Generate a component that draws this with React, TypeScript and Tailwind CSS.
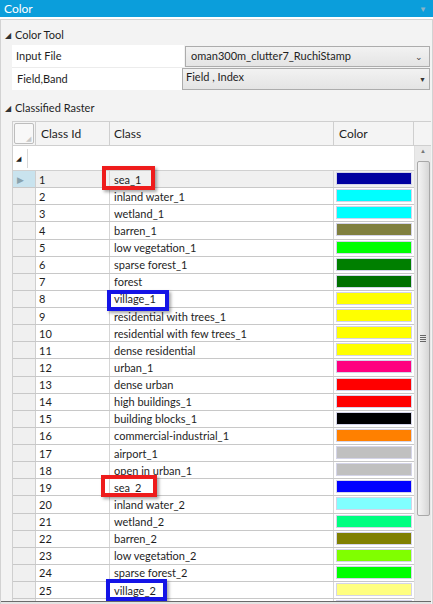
import React from "react";

type Row = { id: number; name: string; color: string };

const rows: Row[] = [
  { id: 1, name: "sea_1", color: "#0000a0" },
  { id: 2, name: "inland water_1", color: "#00ffff" },
  { id: 3, name: "wetland_1", color: "#00ffff" },
  { id: 4, name: "barren_1", color: "#808040" },
  { id: 5, name: "low vegetation_1", color: "#00ff00" },
  { id: 6, name: "sparse forest_1", color: "#007f00" },
  { id: 7, name: "forest", color: "#007000" },
  { id: 8, name: "village_1", color: "#ffff00" },
  { id: 9, name: "residential with trees_1", color: "#ffff00" },
  { id: 10, name: "residential with few trees_1", color: "#ffff00" },
  { id: 11, name: "dense residential", color: "#ffff00" },
  { id: 12, name: "urban_1", color: "#ff0080" },
  { id: 13, name: "dense urban", color: "#ff0000" },
  { id: 14, name: "high buildings_1", color: "#ff0000" },
  { id: 15, name: "building blocks_1", color: "#000000" },
  { id: 16, name: "commercial-industrial_1", color: "#ff8000" },
  { id: 17, name: "airport_1", color: "#c0c0c0" },
  { id: 18, name: "open in urban_1", color: "#c0c0c0" },
  { id: 19, name: "sea_2", color: "#0000ff" },
  { id: 20, name: "inland water_2", color: "#80ffff" },
  { id: 21, name: "wetland_2", color: "#00ff80" },
  { id: 22, name: "barren_2", color: "#808000" },
  { id: 23, name: "low vegetation_2", color: "#80ff00" },
  { id: 24, name: "sparse forest_2", color: "#00ff00" },
  { id: 25, name: "village_2", color: "#ffff80" },
  { id: 26, name: "", color: "#ffff80" },
];

// boxes drawn over the grid (relative to the rows area)
const marks = [
  { top: -5, left: 89, w: 53, h: 24, red: true },
  { top: 119, left: 94, w: 62, h: 21, red: false },
  { top: 304, left: 88, w: 56, h: 22, red: true },
  { top: 408, left: 93, w: 61, h: 22, red: false },
];

function SectionHeader({ label }: { label: string }) {
  return (
    <div className="flex h-[20px] shrink-0 items-center gap-[4px] pl-[4px] text-[11px] text-[#1e1e1e]">
      <span className="text-[8px] leading-none text-[#333]">◢</span>
      <span>{label}</span>
    </div>
  );
}

export default function App() {
  return (
    <div
      className="flex h-[604px] w-[433px] flex-col overflow-hidden bg-white"
      style={{ fontFamily: "Lato, 'Open Sans', sans-serif" }}
    >
      <div className="flex h-[17px] shrink-0 items-center justify-between bg-[#0b9edb] pl-[4px] pr-[6px] text-[12px] text-white">
        <span>Color</span>
        <span className="text-[8px] text-[#8ab4c8]">▼</span>
      </div>
      <div className="h-[2px] shrink-0 bg-white" />
      <div className="flex min-h-0 flex-1 flex-col border-l border-r border-t border-[#d2d2d2] bg-[#f3f3f3] pr-[1px]">
        <div className="h-[5px] shrink-0" />
        <SectionHeader label="Color Tool" />
        <div className="ml-[11px] flex shrink-0 flex-col text-[11px] text-[#1e1e1e]">
          <div className="flex h-[23px]">
            <div className="flex w-[172px] items-center border-b border-[#ececec] bg-white pl-[4px]">Input File</div>
            <div className="mx-[1px] my-[1px] flex flex-1 items-center justify-between border border-[#acacac] bg-gradient-to-b from-[#f2f2f2] to-[#e4e4e4] pl-[5px] pr-[6px]">
              <span>oman300m_clutter7_RuchiStamp</span>
              <span className="text-[9px] text-[#444]">⌄</span>
            </div>
          </div>
          <div className="flex h-[22px]">
            <div className="flex w-[170px] items-center bg-white pl-[5px]">Field,Band</div>
            <div className="mr-[1px] flex flex-1 items-center justify-between border border-[#acacac] bg-gradient-to-b from-[#f2f2f2] to-[#e4e4e4] pl-[3px] pr-[3px]">
              <span className="-mt-[3px]">Field , Index</span>
              <span className="text-[7px] text-[#333]">▼</span>
            </div>
          </div>
        </div>
        <div className="h-[8px] shrink-0" />
        <SectionHeader label="Classified Raster" />
        <div className="ml-[11px] mt-[3px] flex min-h-0 flex-1 flex-col overflow-hidden border-l border-t border-[#cfcfcf] bg-white text-[11px] text-[#1e1e1e]">
          {/* header */}
          <div className="flex h-[24px] shrink-0 border-b border-[#cfcfcf] bg-[#f4f4f4]">
            <div className="relative w-[23px] shrink-0 border-r border-[#cfcfcf]">
              <div className="absolute inset-[1px] rounded-[2px] border border-[#bdbdbd] bg-[#f8f8f8]" />
              <span className="absolute bottom-[3px] right-[4px] text-[7px] leading-none text-[#c8c8c8]">◢</span>
            </div>
            <div className="flex w-[74px] shrink-0 items-center border-r border-[#cfcfcf] pl-[5px] text-[12px]">Class Id</div>
            <div className="flex w-[224px] shrink-0 items-center border-r border-[#cfcfcf] pl-[4px] text-[12px]">Class</div>
            <div className="flex w-[80px] shrink-0 items-center border-r border-[#cfcfcf] pl-[5px] text-[12px]">Color</div>
            <div className="flex-1" />
          </div>
          <div className="flex min-h-0 flex-1">
            <div className="flex w-[401px] min-w-0 shrink-0 flex-col">
              {/* group row */}
              <div className="flex h-[24px] shrink-0 items-start bg-white">
                <span className="mt-[9px] pl-[3px] text-[7px] leading-none text-[#222]">◢</span>
                <div className="ml-[6px] mt-[3px] h-[19px] w-[9px] border-l border-[#d8d8d8] bg-white" />
              </div>
              <div className="relative flex min-h-0 flex-1 flex-col border-t border-[#d0d0d0]">
                {rows.map((r) => (
                  <div
                    key={r.id}
                    className={`flex h-[17.125px] shrink-0 border-b border-[#c8c8c8] ${r.id === 1 ? "bg-[#f0f0f0]" : "bg-white"}`}
                  >
                    <div
                      className={`flex w-[23px] shrink-0 items-center border-r border-[#cfcfcf] pl-[4px] ${r.id === 1 ? "bg-[#c9e3ee]" : "bg-[#f0f0f0]"}`}
                    >
                      {r.id === 1 ? <span className="text-[9px] leading-none text-[#8aa3ae]">▶</span> : null}
                    </div>
                    <div className="flex w-[74px] shrink-0 items-center border-r border-[#d6d6d6] pl-[3px] leading-none">
                      {r.name ? r.id : ""}
                    </div>
                    <div className="flex w-[224px] shrink-0 items-center border-r border-[#d6d6d6] pl-[4px] leading-none">
                      {r.name}
                    </div>
                    <div className="flex w-[80px] shrink-0 items-start px-[2px] pt-[1px]">
                      <div className="h-[13px] w-full border border-[#d4d4e8]">
                        <div className="h-full w-full" style={{ backgroundColor: r.color }} />
                      </div>
                    </div>
                  </div>
                ))}
                {marks.map((m, i) => (
                  <div
                    key={i}
                    className={`absolute border-[4px] shadow-[2px_2px_3px_rgba(0,0,0,0.35)] ${m.red ? "border-[#ee1c1c]" : "border-[#1414e6]"}`}
                    style={{ top: m.top, left: m.left, width: m.w, height: m.h }}
                  />
                ))}
              </div>
            </div>
            {/* vertical scrollbar */}
            <div className="flex w-[17px] shrink-0 flex-col items-center border-l border-[#e0e0e0] bg-[#e9e9e9] pt-[2px]">
              <span className="text-[6px] leading-none text-[#777]">▲</span>
              <div className="mt-[7px] flex h-[355px] w-[13px] flex-col items-center justify-center rounded-[2px] border border-[#a8a8a8] bg-gradient-to-r from-[#f4f4f4] via-[#e6e6e6] to-[#d6d6d6]">
                <div className="flex flex-col gap-[1px]">
                  <div className="h-[1px] w-[6px] bg-[#666]" />
                  <div className="h-[1px] w-[6px] bg-[#666]" />
                  <div className="h-[1px] w-[6px] bg-[#666]" />
                  <div className="h-[1px] w-[6px] bg-[#666]" />
                </div>
              </div>
            </div>
          </div>
        </div>
        <div className="h-[3px] shrink-0 border-t border-[#6a6a6a] bg-[#e4e4e4]" />
      </div>
    </div>
  );
}
